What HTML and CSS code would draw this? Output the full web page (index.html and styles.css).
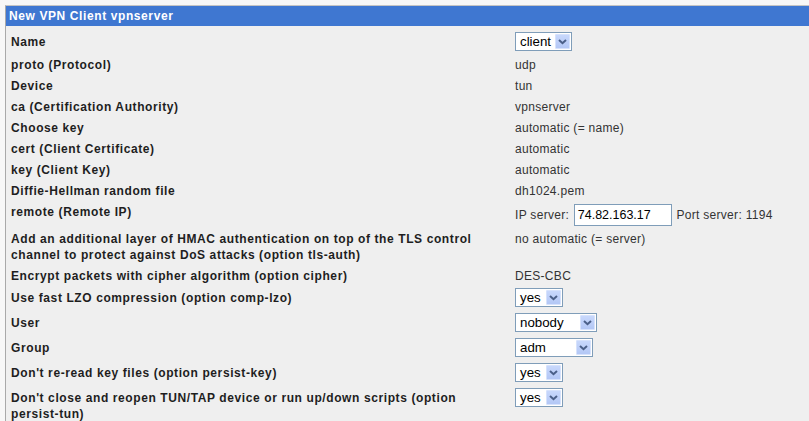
FILE: index.html
```html
<!DOCTYPE html>
<html>
<head>
<meta charset="utf-8">
<title>New VPN Client vpnserver</title>
<link rel="stylesheet" href="styles.css">
</head>
<body>
<div class="panel">
  <div class="header">New VPN Client vpnserver</div>
  <table class="form">
    <colgroup><col class="c-label"><col class="c-value"></colgroup>
    <tr class="r-first">
      <td class="lbl">Name</td>
      <td class="val"><span class="sel w-client"><span class="sel-text">client</span><span class="sel-btn"><svg width="9" height="6" viewBox="0 0 9 6"><path d="M1 1 L4.5 4.2 L8 1" fill="none" stroke="#4a5f88" stroke-width="2"/></svg></span></span></td>
    </tr>
    <tr class="r-text"><td class="lbl">proto (Protocol)</td><td class="val">udp</td></tr>
    <tr class="r-text"><td class="lbl">Device</td><td class="val">tun</td></tr>
    <tr class="r-text"><td class="lbl">ca (Certification Authority)</td><td class="val">vpnserver</td></tr>
    <tr class="r-text"><td class="lbl">Choose key</td><td class="val">automatic (= name)</td></tr>
    <tr class="r-text"><td class="lbl">cert (Client Certificate)</td><td class="val">automatic</td></tr>
    <tr class="r-text"><td class="lbl">key (Client Key)</td><td class="val">automatic</td></tr>
    <tr class="r-text"><td class="lbl">Diffie-Hellman random file</td><td class="val">dh1024.pem</td></tr>
    <tr class="r-input">
      <td class="lbl">remote (Remote IP)</td>
      <td class="val">IP server: <span class="inp">74.82.163.17</span> Port server: 1194</td>
    </tr>
    <tr class="r-text"><td class="lbl">Add an additional layer of HMAC authentication on top of the TLS control channel to protect against DoS attacks (option tls-auth)</td><td class="val">no automatic (= server)</td></tr>
    <tr class="r-text"><td class="lbl">Encrypt packets with cipher algorithm (option cipher)</td><td class="val">DES-CBC</td></tr>
    <tr class="r-sel">
      <td class="lbl">Use fast LZO compression (option comp-lzo)</td>
      <td class="val"><span class="sel w-yes"><span class="sel-text">yes</span><span class="sel-btn"><svg width="9" height="6" viewBox="0 0 9 6"><path d="M1 1 L4.5 4.2 L8 1" fill="none" stroke="#4a5f88" stroke-width="2"/></svg></span></span></td>
    </tr>
    <tr class="r-sel">
      <td class="lbl">User</td>
      <td class="val"><span class="sel w-nobody"><span class="sel-text">nobody</span><span class="sel-btn"><svg width="9" height="6" viewBox="0 0 9 6"><path d="M1 1 L4.5 4.2 L8 1" fill="none" stroke="#4a5f88" stroke-width="2"/></svg></span></span></td>
    </tr>
    <tr class="r-sel">
      <td class="lbl">Group</td>
      <td class="val"><span class="sel w-adm"><span class="sel-text">adm</span><span class="sel-btn"><svg width="9" height="6" viewBox="0 0 9 6"><path d="M1 1 L4.5 4.2 L8 1" fill="none" stroke="#4a5f88" stroke-width="2"/></svg></span></span></td>
    </tr>
    <tr class="r-sel">
      <td class="lbl">Don't re-read key files (option persist-key)</td>
      <td class="val"><span class="sel w-yes"><span class="sel-text">yes</span><span class="sel-btn"><svg width="9" height="6" viewBox="0 0 9 6"><path d="M1 1 L4.5 4.2 L8 1" fill="none" stroke="#4a5f88" stroke-width="2"/></svg></span></span></td>
    </tr>
    <tr class="r-sel">
      <td class="lbl">Don't close and reopen TUN/TAP device or run up/down scripts (option persist-tun)</td>
      <td class="val"><span class="sel w-yes"><span class="sel-text">yes</span><span class="sel-btn"><svg width="9" height="6" viewBox="0 0 9 6"><path d="M1 1 L4.5 4.2 L8 1" fill="none" stroke="#4a5f88" stroke-width="2"/></svg></span></span></td>
    </tr>
  </table>
</div>
</body>
</html>
```
FILE: styles.css
```css
html, body {
  margin: 0;
  padding: 0;
}
body {
  background: #f7f7f7;
  font-family: "Liberation Sans", Arial, sans-serif;
  font-size: 12px;
  color: #222;
  padding: 5px 0 0 5px;
  height: 421px;
  box-sizing: border-box;
  overflow: hidden;
}
.panel {
  background: #efefef;
  border-top: 1px solid #c4c4c4;
  border-left: 1px solid #a9a9a9;
  height: 100%;
}
.header {
  background: #3f77d1;
  color: #fff;
  font-weight: bold;
  letter-spacing: 0.6px;
  height: 20px;
  line-height: 20px;
  padding-left: 3px;
}
.form {
  width: 100%;
  border-collapse: collapse;
  table-layout: fixed;
}
.c-label { width: 504px; }
.form td {
  vertical-align: baseline;
  line-height: 16px;
  padding: 2px 5px 3px 5px;
}
.lbl {
  font-weight: bold;
  color: #1e1e1e;
  letter-spacing: 0.6px;
}
.val {
  color: #333;
  letter-spacing: 0.3px;
}
.r-first td { padding-top: 6px; padding-bottom: 4px; }
.r-input td { vertical-align: top; padding-top: 2px; padding-bottom: 3px; }
.r-sel td { padding-top: 1px; padding-bottom: 5px; }

.sel {
  display: inline-flex;
  align-items: center;
  box-sizing: border-box;
  height: 19px;
  border: 1px solid #7f9db9;
  background: #fff;
  vertical-align: baseline;
  letter-spacing: 0;
}
.sel-text {
  flex: 1;
  font-size: 13.3px;
  color: #000;
  padding-left: 4px;
  line-height: 17px;
}
.sel-btn {
  box-sizing: border-box;
  width: 15px;
  height: 15px;
  margin-right: 1px;
  border: 1px solid #d6e2fc;
  border-radius: 1px;
  background: linear-gradient(#c8d8fc, #b3c7f5);
  display: flex;
  align-items: center;
  justify-content: center;
}
.w-client { width: 57px; }
.w-yes { width: 48px; }
.w-nobody { width: 82px; }
.w-adm { width: 78px; }

.inp {
  display: inline-block;
  box-sizing: border-box;
  width: 98px;
  height: 22px;
  line-height: 20px;
  border: 1px solid #7f9db9;
  background: #fff;
  color: #000;
  padding-left: 3px;
  margin: 0 1px;
  font-size: 12.5px;
  letter-spacing: 0;
}
```
